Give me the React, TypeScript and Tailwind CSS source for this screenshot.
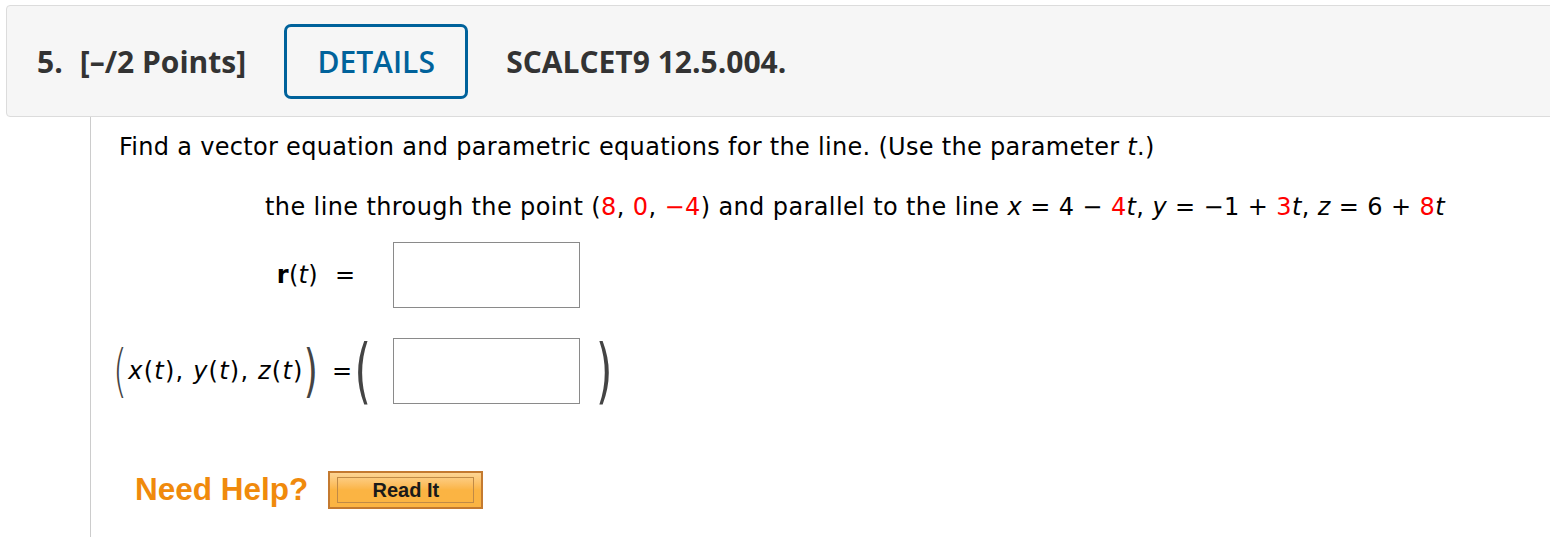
import * as React from "react";

const body = "font-['DejaVu_Sans',Verdana,sans-serif]";

function Red({ children }: { children: React.ReactNode }) {
  return <span className="text-[#ff0000]">{children}</span>;
}

function T({ children }: { children: React.ReactNode }) {
  return <i className="italic">{children}</i>;
}

function AnswerBox() {
  return <div className="h-[66px] w-[187px] border border-[#8a8a8a] bg-white" />;
}

export default function App() {
  return (
    <div className="relative h-[537px] w-[1550px] overflow-hidden bg-white text-black">
      <div className="pl-[6px] pt-[5px]">
        <div className="flex h-[112px] w-[1570px] items-center rounded-[4px] border border-[#dcdcdc] bg-[#f6f6f6] pl-[30px] font-['Open_Sans',sans-serif] text-[#333333]">
          <span className="text-[30px] font-bold">5.</span>
          <span className="ml-[17px] text-[30px] font-bold">[–/2 Points]</span>
          <button
            type="button"
            className="ml-[38px] flex h-[75px] w-[184px] items-center justify-center rounded-[7px] border-[3px] border-[#00629b] text-[30px] font-semibold text-[#00629b]"
          >
            DETAILS
          </button>
          <span className="ml-[38px] text-[30px] font-bold">SCALCET9 12.5.004.</span>
        </div>
      </div>

      <div className={`ml-[90px] h-[421px] border-l border-[#cccccc] pl-[28px] ${body} text-[24px] tracking-[0.3px] text-black`}>
        <p className="pt-[15px] leading-[30px]">
          Find a vector equation and parametric equations for the line. (Use the parameter <T>t</T>.)
        </p>

        <p className="pl-[146px] pt-[30px] leading-[30px] tracking-[0.39px]">
          the line through the point (<Red>8</Red>, <Red>0</Red>, <Red>−4</Red>) and parallel to the line <T>x</T> = 4 − <Red>4</Red><T>t</T>, <T>y</T> = −1 + <Red>3</Red><T>t</T>, <T>z</T> = 6 + <Red>8</Red><T>t</T>
        </p>

        <div className="mt-[20px] flex items-center">
          <div className="flex w-[274px] items-center justify-end">
            <span>
              <b className="font-bold">r</b>(<T>t</T>)
            </span>
            <span className="ml-[17px] w-[16px]">=</span>
            <span className="w-[42px]" />
          </div>
          <AnswerBox />
        </div>

        <div className="mt-[30px] flex items-center">
          <div className="flex w-[274px] items-center">
            <span className="-ml-[6px] inline-block origin-center scale-y-[1.6] text-[36px] font-thin leading-none text-[#444]">(</span>
            <span className="ml-[1px] tracking-[1.2px]">
              <T>x</T>(<T>t</T>), <T>y</T>(<T>t</T>), <T>z</T>(<T>t</T>)
            </span>
            <span className="inline-block origin-center scale-y-[1.6] text-[36px] leading-none text-[#444]">)</span>
            <span className="ml-[14px]">=</span>
            <span className="ml-[2px] inline-block origin-center scale-y-[1.7] text-[42px] leading-none text-[#444]">(</span>
          </div>
          <AnswerBox />
          <span className="ml-[16px] inline-block origin-center scale-y-[1.7] text-[42px] leading-none text-[#444]">)</span>
        </div>

        <div className="mt-[62px] flex items-center pl-[16px]">
          <span className="font-['Liberation_Sans',Arial,sans-serif] text-[31.5px] font-bold tracking-normal text-[#f08a0c]">Need Help?</span>
          <button
            type="button"
            className="ml-[20px] flex h-[38px] w-[155px] items-center justify-center border-2 border-[#c47a30] bg-gradient-to-b from-[#fdd593] via-[#fbb443] to-[#fbb443] p-[4px_7px]"
          >
            <span className="flex h-full w-full items-center justify-center border border-[#c08a46] font-['Liberation_Sans',Arial,sans-serif] text-[20px] font-bold tracking-normal text-[#1a1a1a]">
              Read It
            </span>
          </button>
        </div>
      </div>
    </div>
  );
}
